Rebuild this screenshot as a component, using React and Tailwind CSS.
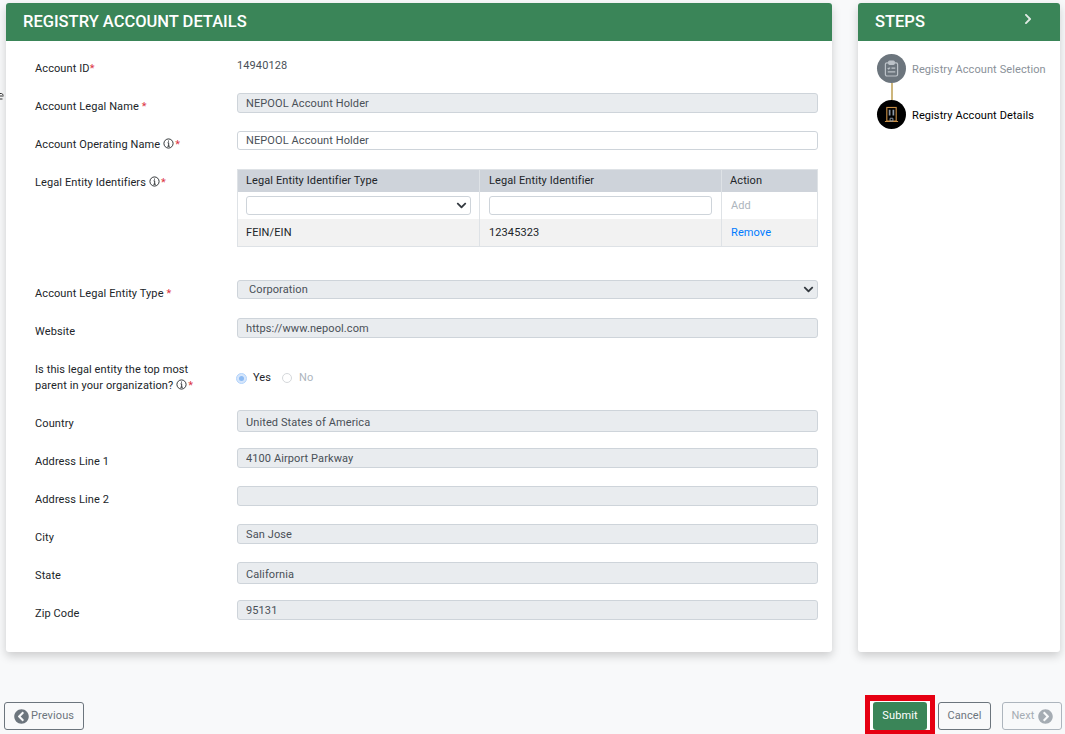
import { FaChevronCircleLeft, FaChevronCircleRight, FaChevronRight, FaChevronDown } from "react-icons/fa";

function Info() {
  return (
    <svg viewBox="0 0 12 12" className="inline-block w-[11px] h-[11px] ml-[3px] mr-[1px] align-[-1px]" fill="none" stroke="#212529">
      <circle cx="6" cy="6" r="5" strokeWidth="1" />
      <path d="M5 5.2h1.2V9M4.8 9h2.6M6 2.8v1.2" strokeWidth="1" />
    </svg>
  );
}

function Req() {
  return <span className="text-[#dc3545]">*</span>;
}

function Field({ label, value, disabled = true, h = "h-[20px]" }) {
  return (
    <div className="flex h-[38px]">
      <label className="w-[202px] pt-[6px] leading-[16px] text-[#212529]">{label}</label>
      <input
        readOnly
        value={value}
        className={`w-[581px] ${h} rounded-[3px] border border-[#ced4da] px-[8px] text-[11px] text-[#495057] outline-none ${
          disabled ? "bg-[#e9ecef]" : "bg-white"
        }`}
      />
    </div>
  );
}

function Step({ label, active, children }) {
  return (
    <div className="flex items-center gap-[6px]">
      <div
        className={`flex items-center justify-center w-[29px] h-[29px] rounded-full ${
          active ? "bg-black" : "bg-[#6c757d]"
        }`}
      >
        {children}
      </div>
      <span className={`mt-[3px] ${active ? "text-black" : "text-[#8a9199]"}`}>{label}</span>
    </div>
  );
}

export default function App() {
  return (
    <div
      className="relative h-[734px] w-[1065px] overflow-hidden bg-[#f8f9fa] flex flex-col text-[11px] tracking-[0.1px] text-[#212529]"
      style={{ fontFamily: "Roboto, 'Liberation Sans', sans-serif" }}
    >
      {/* sliver of something cut off at the left edge */}
      <svg viewBox="0 0 4 10" className="absolute left-0 top-[90px] w-[4px] h-[10px]" fill="none" stroke="#333" strokeWidth="1">
        <path d="M0 3.5h1.5L3.5 5M0 6h3.5M0 9h2.5" />
      </svg>

      <div className="flex items-start gap-[26px] pl-[6px] pt-[3px]">
        {/* Main form card */}
        <div className="w-[826px] h-[649px] bg-white rounded-[3px] shadow-[0_4px_10px_rgba(0,0,0,0.18)] overflow-hidden">
          <div className="h-[38px] bg-[#3a8558] text-white text-[16.5px] font-medium tracking-normal pl-[17px] leading-[37px]">
            REGISTRY ACCOUNT DETAILS
          </div>
          <div className="pl-[29px] pt-[14px]">
            <div className="flex h-[38px]">
              <label className="w-[202px] pt-[6px] leading-[16px]">
                Account ID
                <Req />
              </label>
              <span className="text-[#495057] pt-[3px] leading-[16px]">14940128</span>
            </div>
            <Field
              label={
                <>
                  Account Legal Name <Req />
                </>
              }
              value="NEPOOL Account Holder"
            />
            <Field
              label={
                <>
                  Account Operating Name
                  <Info />
                  <Req />
                </>
              }
              value="NEPOOL Account Holder"
              disabled={false}
              h="h-[19px]"
            />

            <div className="flex h-[111px]">
              <label className="w-[202px] pt-[6px] leading-[16px]">
                Legal Entity Identifiers
                <Info />
                <Req />
              </label>
              <div className="w-[581px] h-[78px] border border-[#dee2e6] text-[11px]">
                <div className="flex h-[22px] bg-[#ced3da] leading-[21px]">
                  <div className="w-[242px] pl-[8px] border-r border-[#dee2e6]">Legal Entity Identifier Type</div>
                  <div className="w-[242px] pl-[9px] border-r border-[#dee2e6]">Legal Entity Identifier</div>
                  <div className="flex-1 pl-[8px]">Action</div>
                </div>
                <div className="flex h-[27px] bg-white items-center">
                  <div className="w-[242px] h-full pl-[8px] flex items-center border-r border-[#dee2e6]">
                    <div className="relative w-[225px] h-[19px] rounded-[3px] border border-[#ced4da] bg-white">
                      <FaChevronDown className="absolute right-[3px] top-[3px] w-[11px] h-[11px] text-[#343a40]" />
                    </div>
                  </div>
                  <div className="w-[242px] h-full pl-[9px] flex items-center border-r border-[#dee2e6]">
                    <input readOnly className="w-[223px] h-[19px] rounded-[3px] border border-[#ced4da] bg-white outline-none" />
                  </div>
                  <div className="flex-1 pl-[9px] pt-[2px] text-[#adb5bd]">Add</div>
                </div>
                <div className="flex h-[27px] bg-[#f2f2f2] items-center">
                  <div className="w-[242px] h-full pl-[8px] pt-[2px] flex items-center border-r border-[#dee2e6]">FEIN/EIN</div>
                  <div className="w-[242px] h-full pl-[9px] pt-[2px] flex items-center border-r border-[#dee2e6]">12345323</div>
                  <div className="flex-1 pl-[9px] pt-[2px] text-[#007bff]">Remove</div>
                </div>
              </div>
            </div>

            <div className="flex h-[38px]">
              <label className="w-[202px] pt-[6px] leading-[16px]">
                Account Legal Entity Type <Req />
              </label>
              <div className="relative w-[581px] h-[19px] rounded-[3px] border border-[#ced4da] bg-[#e9ecef] pl-[11px] leading-[18px] text-[#495057]">
                Corporation
                <FaChevronDown className="absolute right-[3px] top-[3px] w-[11px] h-[11px] text-[#343a40]" />
              </div>
            </div>
            <Field label="Website" value="https://www.nepool.com" />

            <div className="flex h-[54px]">
              <label className="w-[202px] pt-[6px] leading-[16px]">
                Is this legal entity the top most
                <br />
                parent in your organization?
                <Info />
                <Req />
              </label>
              <div className="flex items-center h-[16px] mt-[14px] leading-[16px]">
                <span className="flex items-center justify-center w-[11px] h-[11px] -ml-[1px] rounded-full border border-[#b3d4fc] bg-[#d6e6fb]">
                  <span className="w-[5px] h-[5px] rounded-full bg-[#8dbbf3]" />
                </span>
                <span className="ml-[6px]">Yes</span>
                <span className="ml-[11px] w-[10px] h-[10px] rounded-full border border-[#d5d8db] bg-white" />
                <span className="ml-[7px] text-[#adb5bd]">No</span>
              </div>
            </div>

            <Field label="Country" value="United States of America" h="h-[22px] pt-[2px]" />
            <Field label="Address Line 1" value="4100 Airport Parkway" />
            <Field label="Address Line 2" value="" />
            <Field label="City" value="San Jose" />
            <Field label="State" value="California" h="h-[22px] pt-[2px]" />
            <Field label="Zip Code" value="95131" />
          </div>
        </div>

        {/* Steps card */}
        <div className="w-[202px] h-[649px] bg-white rounded-[3px] shadow-[0_4px_10px_rgba(0,0,0,0.18)] overflow-hidden">
          <div className="flex items-start justify-between h-[38px] bg-[#3a8558] text-white text-[16.5px] font-medium tracking-normal pl-[17px] pr-[26px] leading-[37px]">
            STEPS
            <FaChevronRight className="w-[12px] h-[12px] mt-[10px] text-[#dfe9e3]" />
          </div>
          <div className="pl-[19px] pt-[13px]">
            <Step label="Registry Account Selection">
              <svg viewBox="0 0 16 18" className="w-[15px] h-[17px]" fill="none" stroke="#bcc2c8" strokeWidth="1.3">
                <rect x="1.5" y="3" width="13" height="14" rx="1.5" />
                <rect x="5" y="1" width="6" height="3.5" rx="1" fill="#bcc2c8" />
                <path d="M4 8.5l1 1 1.5-1.5M8 8.5h4M4 12.5h8" />
              </svg>
            </Step>
            <div className="ml-[14px] w-[2px] h-[17px] bg-[#cdb67c]" />
            <Step label="Registry Account Details" active>
              <svg viewBox="0 0 16 18" className="w-[15px] h-[17px]" fill="none" stroke="#c98f45" strokeWidth="1.2">
                <rect x="3" y="1.5" width="10" height="14.5" />
                <path d="M1 16.5h14" />
                <path d="M6 4v6M10 4v6" stroke="#8c99a8" strokeWidth="1.8" />
                <path d="M6.5 13h3v3h-3z" stroke="#8c99a8" strokeWidth="1" />
              </svg>
            </Step>
          </div>
        </div>
      </div>

      {/* Footer buttons */}
      <div className="flex items-start mt-[43px] pl-[4px]">
        <button className="flex items-center gap-[2px] mt-[7px] w-[80px] h-[28px] justify-center rounded-[3px] border border-[#6c757d] text-[#6c757d]">
          <FaChevronCircleLeft className="w-[15px] h-[15px]" />
          <span className="pt-[1px]">Previous</span>
        </button>
        <div className="ml-auto flex justify-center border-x-[5px] border-t-[6px] border-b-[4px] border-[#e60012] w-[70px] h-[39px] pt-[1px] bg-white">
          <button className="w-[54px] h-[28px] rounded-[3px] bg-[#3a8558] text-white pt-[1px]">Submit</button>
        </div>
        <button className="ml-[3px] mt-[7px] w-[53px] h-[28px] pt-[1px] rounded-[3px] border border-[#6c757d] text-[#6c757d]">Cancel</button>
        <button className="ml-[11px] mr-[3px] mt-[7px] flex items-center justify-center gap-[3px] w-[60px] h-[28px] rounded-[3px] border border-[#adb5bd] text-[#a5acb3]">
          <span className="pt-[1px]">Next</span>
          <FaChevronCircleRight className="w-[15px] h-[15px]" />
        </button>
      </div>
    </div>
  );
}
